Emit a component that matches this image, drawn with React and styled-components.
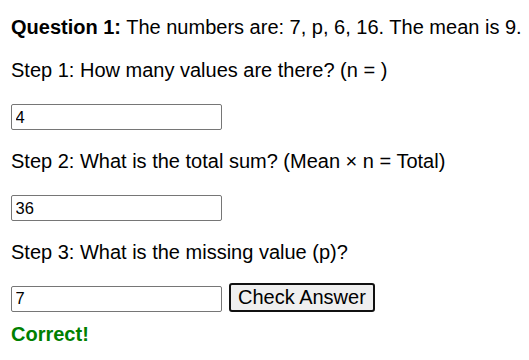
import styled, { createGlobalStyle } from 'styled-components'

const GlobalStyle = createGlobalStyle`
  body {
    margin: 0;
    background: #fff;
    color: #000;
    font-family: "Liberation Sans", Arial, sans-serif;
  }
`

const Page = styled.div`
  display: flex;
  flex-direction: column;
  align-items: flex-start;
  padding: 16px 10px 0 11px;
  font-size: 20px;
  line-height: 23px;
`

const Question = styled.p`
  margin: 0;
  white-space: nowrap;
`

const StepLabel = styled.p`
  margin: 20px 0 0;
  white-space: nowrap;
`

const AnswerInput = styled.input`
  box-sizing: border-box;
  width: 211px;
  height: 26px;
  margin: ${(p) => (p.$inRow ? '0' : '22px 0 0')};
  padding: 1px 3.5px;
  border: 1px solid #767676;
  border-radius: 2px;
  background: #fff;
  color: #000;
  font-family: "Liberation Sans", Arial, sans-serif;
  font-size: 16.5px;
  outline: none;
`

const SubmitRow = styled.div`
  display: flex;
  align-items: flex-end;
  gap: 6.5px;
  margin-top: 19px;
`

const CheckButton = styled.button`
  box-sizing: border-box;
  height: 28.7px;
  padding: 0 7.5px;
  border: 2px solid #111;
  border-radius: 3px;
  background: #efefef;
  color: #000;
  font-family: "Liberation Sans", Arial, sans-serif;
  font-size: 20px;
  line-height: 23px;
  cursor: pointer;
`

const Feedback = styled.div`
  margin-top: 11px;
  font-weight: 700;
  color: ${(p) => (p.$correct ? '#008000' : '#c00')};
`

function App() {
  return (
    <>
      <GlobalStyle />
      <Page>
        <Question>
          <strong>Question 1:</strong> The numbers are: 7, p, 6, 16. The mean is 9.
        </Question>

        <StepLabel>Step 1: How many values are there? (n = )</StepLabel>
        <AnswerInput type="text" defaultValue="4" />

        <StepLabel>Step 2: What is the total sum? (Mean × n = Total)</StepLabel>
        <AnswerInput type="text" defaultValue="36" />

        <StepLabel>Step 3: What is the missing value (p)?</StepLabel>
        <SubmitRow>
          <AnswerInput type="text" defaultValue="7" $inRow />
          <CheckButton type="button">Check Answer</CheckButton>
        </SubmitRow>

        <Feedback $correct>Correct!</Feedback>
      </Page>
    </>
  )
}

export default App
